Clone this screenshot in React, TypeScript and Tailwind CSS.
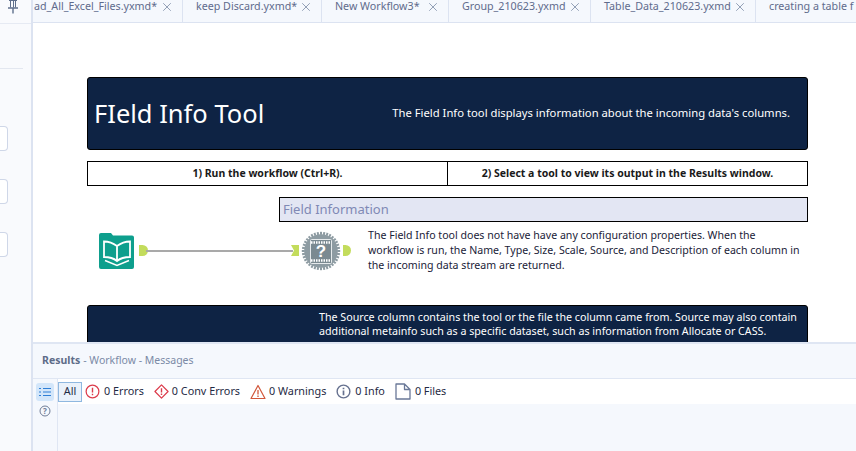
import type { ReactNode } from 'react';
import { X } from 'lucide-react';

const TABS = [
  { name: 'ad_All_Excel_Files.yxmd*', width: 150, pad: 'pl-[1px]' },
  { name: 'keep Discard.yxmd*', width: 139, pad: 'pl-[13px]' },
  { name: 'New Workflow3*', width: 127, pad: 'pl-[13px]' },
  { name: 'Group_210623.yxmd', width: 142, pad: 'pl-[13px]' },
  { name: 'Table_Data_210623.yxmd', width: 165, pad: 'pl-[13px]' },
];

function PinIcon() {
  return (
    <svg width="10" height="14" viewBox="0 0 10 14" fill="none" stroke="#5f6f8c" strokeWidth="1">
      <path d="M1 0.500h8M2.500 0.500v7M7.500 0.500v7M5.500 0.500v7" />
      <path d="M0 8h10M5 8v5.500" strokeWidth="1.400" />
    </svg>
  );
}

function ReaderNode() {
  return (
    <g>
      <path d="M21 41a2 2 0 0 1-2-2V7a2 2 0 0 1 2-2H31l2 2.500H52a2 2 0 0 1 2 2V39a2 2 0 0 1-2 2Z" fill="#0e9f8d" />
      <path d="M37 18C33 15 28 13.500 24 13.500V29C29 29 34 30.500 37 33C40 30.500 45 29 50 29V13.500C46 13.500 41 15 37 18ZM37 18V33" fill="none" stroke="#fff" strokeWidth="1.800" />
      <path d="M25 32.500L37 37.500L49 32.500" fill="none" stroke="#fff" strokeWidth="1.500" />
    </g>
  );
}

function InfoNode() {
  const teeth = Array.from({ length: 36 }, (_, i) => (i * 360) / 36);
  return (
    <g>
      {teeth.map((deg) => (
        <rect key={deg} x="240" y="3.800" width="2" height="3" fill="#8d9ba2" transform={`rotate(${deg} 241 23)`} />
      ))}
      <circle cx="241" cy="23" r="16.800" fill="#8d9ba2" />
      <rect x="230.500" y="11.500" width="21" height="24" rx="1" fill="#7b8a91" stroke="#e6eaec" strokeWidth="1" />
      <path d="M231 14.500h20M231 32.500h20" stroke="#fff" strokeWidth="2.500" strokeDasharray="1.500 1" />
      <text x="241" y="29" textAnchor="middle" fontFamily="'Liberation Sans', sans-serif" fontWeight="700" fontSize="17" fill="#fff">?</text>
    </g>
  );
}

function ToolbarItem({ icon, label, className }: { icon: ReactNode; label: string; className: string }) {
  return (
    <span className={`flex items-center ${className}`}>
      {icon}
      {label}
    </span>
  );
}

export default function App() {
  return (
    <div className="flex h-[451px] w-[856px] overflow-hidden bg-white font-['Noto_Sans',sans-serif] text-[11px]">
      {/* left dock */}
      <aside className="flex w-[33px] shrink-0 flex-col border-r-2 border-[#dce3f1] bg-[#f9fafd]">
        <div className="flex h-[24px] items-start border-b border-[#e6eaf3] pl-[8px]">
          <PinIcon />
        </div>
        <div className="mt-[44px] h-px w-[23px] bg-[#e3e7f0]" />
        <div className="mt-[57px] flex flex-col gap-[28px]">
          <div className="h-[25px] w-[8px] rounded-r-[4px] border border-l-0 border-[#cfd7e8] bg-white" />
          <div className="h-[25px] w-[8px] rounded-r-[4px] border border-l-0 border-[#cfd7e8] bg-white" />
          <div className="h-[25px] w-[8px] rounded-r-[4px] border border-l-0 border-[#cfd7e8] bg-white" />
        </div>
      </aside>

      <div className="flex min-w-0 flex-1 flex-col">
        {/* tabs */}
        <div className="flex h-[23px] shrink-0 overflow-hidden border-b border-[#dce3f1] bg-[#f5f8fd] text-[10.700px] text-[#5f6b8c]">
          {TABS.map((tab) => (
            <div
              key={tab.name}
              style={{ width: tab.width }}
              className={`flex h-full shrink-0 items-center justify-between border-r border-[#dce3f1] pr-[8px] pb-[9px] ${tab.pad}`}
            >
              <span className="whitespace-nowrap">{tab.name}</span>
              <X size={14} strokeWidth={1.5} className="text-[#8593ad]" />
            </div>
          ))}
          <div className="flex h-full items-center pb-[9px] pl-[13px] whitespace-nowrap">creating a table f</div>
        </div>

        {/* canvas */}
        <main className="min-h-0 flex-1 overflow-hidden pt-[54px] pl-[54px] text-[10.600px]">
          <div className="w-[721px]">
            <div className="flex h-[73px] items-center justify-between rounded-[3px] border border-black bg-[#0e2344] pr-[17px] pl-[6px] text-white">
              <h1 className="text-[25.500px] leading-none">FIeld Info Tool</h1>
              <p className="text-[11.250px]">The Field Info tool displays information about the incoming data's columns.</p>
            </div>

            <div className="mt-[11px] flex h-[25px] border border-black text-center text-[10.500px] font-bold text-[#1a1a1a]">
              <div className="flex w-[360px] items-center justify-center border-r border-black">1) Run the workflow (Ctrl+R).</div>
              <div className="flex flex-1 items-center justify-center">2) Select a tool to view its output in the Results window.</div>
            </div>

            <div className="mt-[11px] ml-[192px] flex h-[25px] items-center border border-black bg-[#e3e6f3] pl-[3px] text-[13px] text-[#8089b5]">
              Field Information
            </div>

            <div className="mt-[6px] flex">
              <div className="ml-[-7px] h-[48px] w-[288px] shrink-0">
                <svg width="288" height="48" viewBox="0 0 288 48" className="block">
                  <ReaderNode />
                  <path d="M59 17h3.500a5.500 5.500 0 0 1 0 11H59Z" fill="#c3dc5c" />
                  <path d="M66 23H213" stroke="#a9a9a9" strokeWidth="2" />
                  <path d="M211 17h8v11h-8l3-5.500Z" fill="#c3dc5c" />
                  <InfoNode />
                  <path d="M263 17h2.500a5.500 5.500 0 0 1 0 11H263Z" fill="#c3dc5c" />
                </svg>
              </div>
              <p className="w-[432px] leading-[15px] text-[#1a2238]">
                The Field Info tool does not have have any configuration properties. When the workflow is run, the Name, Type, Size, Scale, Source, and Description of each column in the incoming data stream are returned.
              </p>
            </div>

            <div className="mt-[29px] h-[80px] rounded-[3px] border border-black bg-[#0e2344] pt-[4px] pr-[6px] pl-[231px] text-[10.700px] leading-[14px] text-white">
              The Source column contains the tool or the file the column came from. Source may also contain additional metainfo such as a specific dataset, such as information from Allocate or CASS.
            </div>
          </div>
        </main>

        {/* results panel */}
        <section className="flex h-[109px] shrink-0 flex-col border-t-2 border-[#dfe6f3] bg-[#f5f8fd]">
          <div className="flex h-[35px] shrink-0 items-center border-b border-[#dfe6f3] pl-[9px] text-[10.500px] text-[#7b8aa6]">
            <span className="font-bold text-[#5d6c88]">Results</span>
            <span className="ml-[3px]">- Workflow - Messages</span>
          </div>
          <div className="flex min-h-0 flex-1">
            <div className="flex w-[25px] shrink-0 flex-col items-center gap-[4px] border-r border-[#dfe6f3] pt-[4px]">
              <div className="flex h-[18px] w-[18px] items-center justify-center rounded-[3px] bg-[#d3e6fa]">
                <svg width="12" height="10" viewBox="0 0 12 10" fill="none" stroke="#2f7fd6" strokeWidth="1">
                  <path d="M0 1.500h2M0 5h2M0 8.500h2M4 1.500h8M4 5h8M4 8.500h8" />
                </svg>
              </div>
              <svg width="12" height="12" viewBox="0 0 12 12" fill="none">
                <circle cx="6" cy="6" r="5" stroke="#6f7c96" />
                <text x="6" y="9" textAnchor="middle" fontSize="8" fontWeight="700" fill="#6f7c96">?</text>
              </svg>
            </div>
            <div className="min-w-0 flex-1">
              <div className="flex h-[25px] items-center bg-white text-[10.800px] text-[#1f2a44]">
                <div className="flex h-[20px] w-[24px] items-center justify-center border border-[#8fb8e0] bg-[#eaf2fb]">All</div>
                <ToolbarItem
                  className="ml-[3px] gap-[4px]"
                  label="0 Errors"
                  icon={
                    <svg width="15" height="15" viewBox="0 0 16 16" fill="none">
                      <circle cx="8" cy="8" r="6.800" stroke="#dc3b4b" strokeWidth="1.300" />
                      <path d="M8 4v5M8 10.500v1.500" stroke="#dc3b4b" strokeWidth="1.500" />
                    </svg>
                  }
                />
                <ToolbarItem
                  className="ml-[10px] gap-[3px]"
                  label="0 Conv Errors"
                  icon={
                    <svg width="15" height="15" viewBox="0 0 16 16" fill="none">
                      <path d="M8 1l7 7-7 7-7-7Z" stroke="#dc3b4b" strokeWidth="1.300" strokeLinejoin="round" />
                      <path d="M8 4.500v4.500M8 10.200v1.500" stroke="#dc3b4b" strokeWidth="1.500" />
                    </svg>
                  }
                />
                <ToolbarItem
                  className="ml-[10px] gap-[3px]"
                  label="0 Warnings"
                  icon={
                    <svg width="16" height="16" viewBox="0 0 16 16" fill="none">
                      <path d="M8 1.500L15 14.500H1Z" stroke="#d2573a" strokeWidth="1.200" strokeLinejoin="round" />
                      <path d="M8 6v4.500M8 11.500v1.500" stroke="#d2573a" strokeWidth="1.300" />
                    </svg>
                  }
                />
                <ToolbarItem
                  className="ml-[10px] gap-[4px]"
                  label="0 Info"
                  icon={
                    <svg width="15" height="15" viewBox="0 0 16 16" fill="none">
                      <circle cx="8" cy="8" r="6.800" stroke="#66718f" strokeWidth="1.500" />
                      <path d="M8 7v5M8 4v1.500" stroke="#66718f" strokeWidth="1.800" />
                    </svg>
                  }
                />
                <ToolbarItem
                  className="ml-[10px] gap-[4px]"
                  label="0 Files"
                  icon={
                    <svg width="16" height="17" viewBox="0 0 16 17" fill="none">
                      <path d="M1 1h8.500L15 6.500V16H1ZM9.500 1v5.500H15" stroke="#6a7898" strokeWidth="1.300" strokeLinejoin="round" />
                    </svg>
                  }
                />
              </div>
            </div>
          </div>
        </section>
      </div>
    </div>
  );
}
